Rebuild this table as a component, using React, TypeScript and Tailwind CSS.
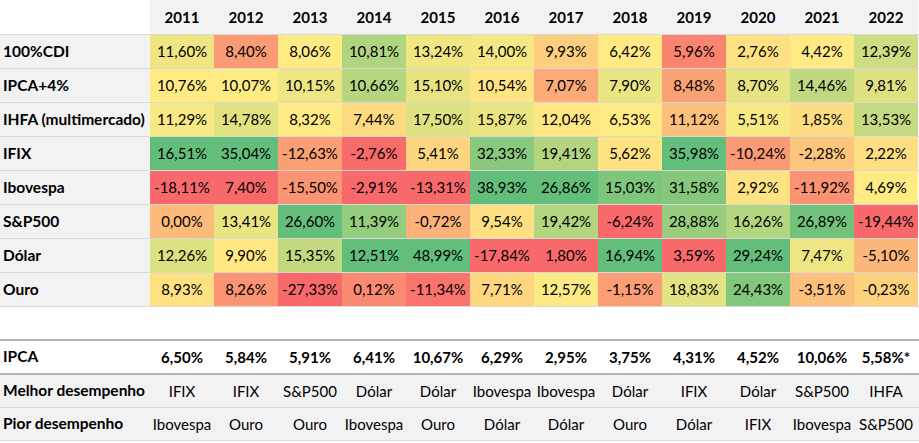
const years = [2011, 2012, 2013, 2014, 2015, 2016, 2017, 2018, 2019, 2020, 2021, 2022];

const rows: { label: string; values: number[] }[] = [
  { label: "100%CDI", values: [11.6, 8.4, 8.06, 10.81, 13.24, 14.0, 9.93, 6.42, 5.96, 2.76, 4.42, 12.39] },
  { label: "IPCA+4%", values: [10.76, 10.07, 10.15, 10.66, 15.1, 10.54, 7.07, 7.9, 8.48, 8.7, 14.46, 9.81] },
  { label: "IHFA (multimercado)", values: [11.29, 14.78, 8.32, 7.44, 17.5, 15.87, 12.04, 6.53, 11.12, 5.51, 1.85, 13.53] },
  { label: "IFIX", values: [16.51, 35.04, -12.63, -2.76, 5.41, 32.33, 19.41, 5.62, 35.98, -10.24, -2.28, 2.22] },
  { label: "Ibovespa", values: [-18.11, 7.4, -15.5, -2.91, -13.31, 38.93, 26.86, 15.03, 31.58, 2.92, -11.92, 4.69] },
  { label: "S&P500", values: [0.0, 13.41, 26.6, 11.39, -0.72, 9.54, 19.42, -6.24, 28.88, 16.26, 26.89, -19.44] },
  { label: "Dólar", values: [12.26, 9.9, 15.35, 12.51, 48.99, -17.84, 1.8, 16.94, 3.59, 29.24, 7.47, -5.1] },
  { label: "Ouro", values: [8.93, 8.26, -27.33, 0.12, -11.34, 7.71, 12.57, -1.15, 18.83, 24.43, -3.51, -0.23] },
];

const ipca = ["6,50%", "5,84%", "5,91%", "6,41%", "10,67%", "6,29%", "2,95%", "3,75%", "4,31%", "4,52%", "10,06%", "5,58%*"];
const best = ["IFIX", "IFIX", "S&P500", "Dólar", "Dólar", "Ibovespa", "Ibovespa", "Dólar", "IFIX", "Dólar", "S&P500", "IHFA"];
const worst = ["Ibovespa", "Ouro", "Ouro", "Ibovespa", "Ouro", "Dólar", "Dólar", "Ouro", "Dólar", "IFIX", "Ibovespa", "S&P500"];

// colour scale groups (2020-2022 were formatted together in the sheet)
const groups = [[0], [1], [2], [3], [4], [5], [6], [7], [8], [9, 10, 11]];

const RED = [248, 105, 107];
const YEL = [255, 235, 132];
const GRN = [99, 190, 123];

function mix(a: number[], b: number[], t: number) {
  const c = a.map((v, i) => Math.round(v + (b[i] - v) * t));
  return `rgb(${c[0]},${c[1]},${c[2]})`;
}

function median(list: number[]) {
  const s = [...list].sort((a, b) => a - b);
  const pos = (s.length - 1) / 2;
  const lo = Math.floor(pos);
  return s[lo] + (s[Math.ceil(pos)] - s[lo]) * (pos - lo);
}

function buildColors() {
  const out: string[][] = rows.map(() => []);
  groups.forEach((cols) => {
    const vals = cols.flatMap((c) => rows.map((r) => r.values[c]));
    const min = Math.min(...vals);
    const max = Math.max(...vals);
    const mid = median(vals);
    cols.forEach((c) => {
      rows.forEach((r, ri) => {
        const v = r.values[c];
        out[ri][c] =
          v <= mid
            ? mix(RED, YEL, (v - min) / (mid - min))
            : mix(YEL, GRN, (v - mid) / (max - mid));
      });
    });
  });
  return out;
}

const fmt = (v: number) => v.toFixed(2).replace(".", ",") + "%";

const grid = "grid grid-cols-[150px_repeat(12,64px)]";

export default function App() {
  const colors = buildColors();

  return (
    <div className="w-[919px] h-[443px] bg-white text-black text-[15px] font-[family-name:Lato,sans-serif] overflow-hidden">
      <div className={`${grid} h-[34px]`}>
        <div />
        {years.map((y) => (
          <div key={y} className="bg-[#f2f2f2] font-bold flex items-center justify-center">
            {y}
          </div>
        ))}
      </div>

      {rows.map((r, ri) => (
        <div key={r.label} className={`${grid} h-[34px] border-t border-[#d9d9d9]`}>
          <div className="bg-[#f2f2f2] font-bold text-[15.5px] flex items-center pl-[3px] whitespace-nowrap">
            {r.label}
          </div>
          {r.values.map((v, ci) => (
            <div
              key={ci}
              className="flex items-center justify-center"
              style={{ backgroundColor: colors[ri][ci] }}
            >
              {fmt(v)}
            </div>
          ))}
        </div>
      ))}

      <div className="h-[33px] border-t border-[#d9d9d9]" />

      <div className={`${grid} h-[34px] border-t-2 border-[#b3b3b3] font-bold`}>
        <div className="flex items-center pl-[3px] text-[15.5px]">IPCA</div>
        {ipca.map((v, i) => (
          <div key={i} className="flex items-center justify-center">
            {v}
          </div>
        ))}
      </div>

      <div className={`${grid} h-[34px] border-t-2 border-[#b3b3b3] bg-[#f2f2f2]`}>
        <div className="flex items-center pl-[3px] font-bold text-[15.5px] whitespace-nowrap">Melhor desempenho</div>
        {best.map((v, i) => (
          <div key={i} className="flex items-center justify-center whitespace-nowrap">
            {v}
          </div>
        ))}
      </div>

      <div className={`${grid} h-[34px] border-y border-[#d9d9d9] bg-[#f2f2f2]`}>
        <div className="flex items-center pl-[3px] font-bold text-[15.5px] whitespace-nowrap">Pior desempenho</div>
        {worst.map((v, i) => (
          <div key={i} className="flex items-center justify-center whitespace-nowrap">
            {v}
          </div>
        ))}
      </div>
    </div>
  );
}
